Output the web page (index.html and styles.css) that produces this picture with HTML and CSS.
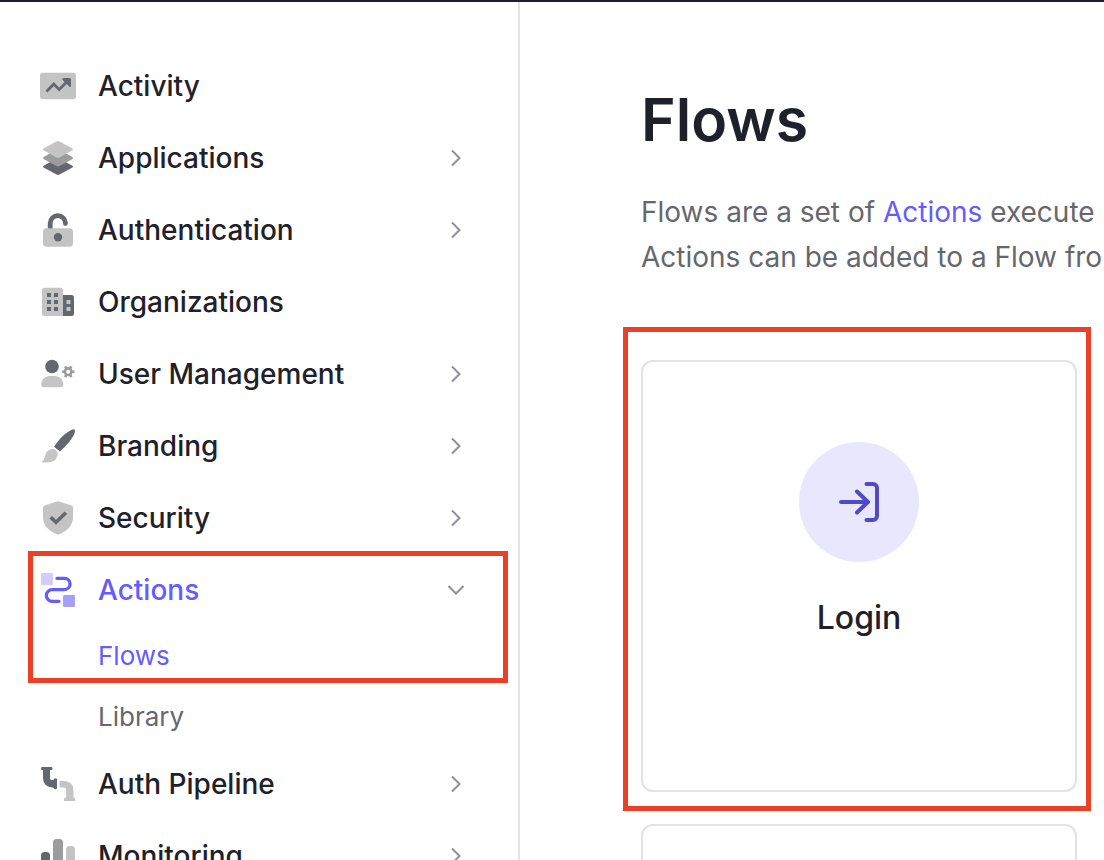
FILE: index.html
```html
<!DOCTYPE html>
<html lang="en">
<head>
    <meta charset="UTF-8">
    <meta name="viewport" content="width=device-width, initial-scale=1.0">
    <title>Flows</title>
    <link rel="stylesheet" href="styles.css">
</head>
<body>

<div class="layout">
    <nav class="sidebar">
        <ul class="menu">
            <li>
                <a class="menu-item" href="#activity">
                    <svg class="icon" viewBox="0 0 36 36">
                        <rect class="light" y="4.7" width="36" height="26.6" rx="3"/>
                        <path class="line" stroke-width="2.8" d="M6.5 23.5 13.8 16l5.4 5.6L27 13.800"/>
                        <path class="dark" d="M23.500 10h6q1.500 0 1.500 1.500v7.300h-1.500l-7.300-7.300q0-1.500 1.300-1.500z"/>
                    </svg>
                    <span class="label">Activity</span>
                </a>
            </li>
            <li>
                <button class="menu-item" type="button">
                    <svg class="icon" viewBox="0 0 36 36">
                        <path class="dark" d="M3.500 25.700 18 18l14.500 7.700q1 .9 0 1.800L19.500 34.600q-1.500.8-3 0L3.500 27.500q-1-.9 0-1.800z"/>
                        <path class="mid" d="M3.500 17.100 18 9l14.500 8.100q1 .9 0 1.800L19.500 26q-1.500.8-3 0L3.500 18.900q-1-.9 0-1.800z"/>
                        <path class="light" d="M3.500 8.400 16.500 1.400q1.500-.8 3 0l13 7q1 .9 0 1.800l-13 7.200q-1.500.8-3 0l-13-7.200q-1-.9 0-1.800z"/>
                    </svg>
                    <span class="label">Applications</span>
                    <svg class="chevron" viewBox="0 0 24 24"><path d="m8 4.500 7.500 7.500L8 19.500"/></svg>
                </button>
            </li>
            <li>
                <button class="menu-item" type="button">
                    <svg class="icon" viewBox="0 0 36 36">
                        <path class="line" stroke-width="4.800" d="M10.200 18v-6.800a7.600 7.600 0 0 1 15.200 0"/>
                        <circle class="dark" cx="25.400" cy="11.500" r="2.400"/>
                        <rect class="light" x="3" y="16.200" width="30" height="18.600" rx="3.500"/>
                        <circle class="dark" cx="18" cy="25.300" r="4.200"/>
                    </svg>
                    <span class="label">Authentication</span>
                    <svg class="chevron" viewBox="0 0 24 24"><path d="m8 4.500 7.500 7.500L8 19.500"/></svg>
                </button>
            </li>
            <li>
                <a class="menu-item" href="#organizations">
                    <svg class="icon" viewBox="0 0 36 36">
                        <path class="light" d="M4.500 3.800h16q2.500 0 2.500 2.500V32H4.500Q2 32 2 29.500V6.300q0-2.500 2.500-2.500z"/>
                        <path class="dark" d="M23 11h8.500q2.500 0 2.500 2.500v16q0 2.500-2.500 2.500H23z"/>
                        <path class="dark" d="M7 9h4v4H7zM14 9h4v4h-4zM7 16h4v4H7zM14 16h4v4h-4zM7 23h4v4H7zM14 23h4v4h-4z"/>
                        <path class="light" d="M26.500 16h4v4h-4zM26.500 23h4v4h-4z"/>
                    </svg>
                    <span class="label">Organizations</span>
                </a>
            </li>
            <li>
                <button class="menu-item" type="button">
                    <svg class="icon" viewBox="0 0 36 36">
                        <circle class="dark" cx="12" cy="10.500" r="6.800"/>
                        <path class="light" d="M9 20h6.500q7.800 1 7.800 9.300 0 2-2 2h-18q-2 0-2-2Q1.300 21 9 20z"/>
                        <g class="gear">
                            <circle cx="28.200" cy="15.700" r="3.300"/>
                            <path d="M32 15.700h2.500M22 15.700h2.400M30.100 19l1.200 2.100M25.100 10.300l1.200 2.100M30.100 12.400l1.200-2.100M25.100 21.100l1.200-2.100"/>
                        </g>
                    </svg>
                    <span class="label">User Management</span>
                    <svg class="chevron" viewBox="0 0 24 24"><path d="m8 4.500 7.500 7.500L8 19.500"/></svg>
                </button>
            </li>
            <li>
                <button class="menu-item" type="button">
                    <svg class="icon" viewBox="0 0 36 36">
                        <path class="dark" d="M34.600 1.500q1 1.500-.8 5.500-3 6.500-13.800 16.500L14 18.800Q21 8 29 3.200q4-2.500 5.600-1.700z"/>
                        <path class="light" d="M11 21.300q3-1 5 1t1.500 5.200Q16 34.500 6 34.600q-4 0-4.500-1.200 3-1.400 3.500-5 .7-5.600 6-7.100z"/>
                    </svg>
                    <span class="label">Branding</span>
                    <svg class="chevron" viewBox="0 0 24 24"><path d="m8 4.500 7.500 7.500L8 19.500"/></svg>
                </button>
            </li>
            <li>
                <button class="menu-item" type="button">
                    <svg class="icon" viewBox="0 0 36 36">
                        <path class="light" d="M17 1.400q1-.4 2 0l12.500 4.100q1.500.5 1.500 2V17q0 11.500-13.800 17.200-1.200.5-2.400 0Q3 28.500 3 17V7.500q0-1.500 1.500-2z"/>
                        <path class="line" stroke-width="3.600" d="m10.700 17.200 5.300 5.100 9.800-9.500"/>
                    </svg>
                    <span class="label">Security</span>
                    <svg class="chevron" viewBox="0 0 24 24"><path d="m8 4.500 7.500 7.500L8 19.500"/></svg>
                </button>
            </li>
            <li>
                <div class="marked marked-menu">
                    <button class="menu-item active" type="button" aria-expanded="true">
                        <svg class="icon" viewBox="0 0 36 36">
                            <rect x="1" y="1" width="12" height="12" rx="1.500" fill="#d0cdfb"/>
                            <rect x="23" y="23" width="12" height="12" rx="1.500" fill="#a49ff7"/>
                            <path d="M17 6.300h7.400a5.600 5.600 0 0 1 0 11.300H12.200a5.800 5.800 0 0 0 0 11.700H19" fill="none" stroke="#635dff" stroke-width="3.300" stroke-linecap="round"/>
                        </svg>
                        <span class="label">Actions</span>
                        <svg class="chevron" viewBox="0 0 24 24"><path d="m4.500 8 7.500 7.500L19.500 8"/></svg>
                    </button>
                    <a class="submenu-item active" href="#flows">Flows</a>
                </div>
                <a class="submenu-item" href="#library">Library</a>
            </li>
            <li>
                <button class="menu-item" type="button">
                    <svg class="icon" viewBox="0 0 36 36">
                        <path class="dark" d="M2 1h9.500q1 0 1 1.500t-1 1.500H10v8.500q0 1.500 2 1.500h1.500q.5-1.800 2-1.800 1.500 0 1.500 1v9q0 1-1.500 1t-2-1.500Q3 21 3 12V4H2Q1 4 1 2.500T2 1z"/>
                        <path class="light" d="M20.500 14.700h2Q33.500 15 33.500 24v7.500h.5q1 0 1 1.500v2H24v-2q0-1.500 1.500-1.500h.7V24q0-2.500-2.700-2.500h-3q-1 0-1-1v-4.800q0-1 1-1z"/>
                    </svg>
                    <span class="label">Auth Pipeline</span>
                    <svg class="chevron" viewBox="0 0 24 24"><path d="m8 4.500 7.500 7.500L8 19.500"/></svg>
                </button>
            </li>
            <li>
                <button class="menu-item" type="button">
                    <svg class="icon" viewBox="0 0 36 36">
                        <rect class="dark" x="1" y="14" width="9" height="21" rx="3.500"/>
                        <rect class="mid" x="13" y="1" width="10" height="34" rx="3.500"/>
                        <rect class="light" x="26" y="8" width="9" height="27" rx="3.500"/>
                    </svg>
                    <span class="label">Monitoring</span>
                    <svg class="chevron" viewBox="0 0 24 24"><path d="m8 4.500 7.500 7.500L8 19.500"/></svg>
                </button>
            </li>
        </ul>
    </nav>

    <main class="content">
        <h1>Flows</h1>
        <p class="intro">
            Flows are a set of <a href="#actions">Actions</a> execute<br>
            Actions can be added to a Flow fro
        </p>
        <div class="cards">
            <div class="marked marked-card">
                <a class="card" href="#login">
                    <span class="card-icon">
                        <svg viewBox="0 0 48 48"><path d="M6 24h27M22 13.500 33 24 22 34.500M31.500 6H38a4 4 0 0 1 4 4v28a4 4 0 0 1-4 4h-6.500"/></svg>
                    </span>
                    <span class="card-title">Login</span>
                </a>
            </div>
            <div class="card"></div>
        </div>
    </main>
</div>

</body>
</html>
```
FILE: styles.css
```css
* {
    margin: 0;
    padding: 0;
    box-sizing: border-box;
}
body {
    font-family: Inter, "Liberation Sans", sans-serif;
    font-size: 28px;
    background-color: #fff;
    color: #1e212a;
}
a {
    color: #635dff;
    text-decoration: none;
}
.layout {
    display: flex;
    height: 100vh;
    overflow: hidden;
    border-top: 2px solid #1e1f25;
}

/* Sidebar */
.sidebar {
    flex: 0 0 520px;
    padding: 48px 50px 0 40px;
    border-right: 2px solid #e3e3e3;
}
.menu {
    list-style: none;
}
.menu-item {
    display: flex;
    align-items: center;
    gap: 22px;
    width: 100%;
    height: 72px;
    border: none;
    background: none;
    font: inherit;
    font-weight: 500;
    color: #1e212a;
    text-align: left;
    cursor: pointer;
}
.label {
    flex: 1;
}
.submenu-item {
    display: flex;
    align-items: center;
    height: 61px;
    padding: 0 0 2px 58px;
    font-size: 26px;
    color: #65676e;
}
.menu-item.active, .submenu-item.active {
    color: #635dff;
}
.icon {
    flex: none;
    width: 36px;
    height: 36px;
}
.light {
    fill: #c4c4c4;
}
.mid {
    fill: #9b9c9e;
}
.dark {
    fill: #65676e;
}
.line {
    fill: none;
    stroke: #65676e;
}
.gear {
    fill: none;
    stroke: #9b9c9e;
    stroke-width: 2.6;
}
.chevron {
    flex: none;
    width: 24px;
    height: 24px;
    fill: none;
    stroke: #8f9098;
    stroke-width: 2;
}

/* Red frames around the highlighted parts */
.marked {
    position: relative;
}
.marked::after {
    content: "";
    position: absolute;
    border: 5px solid #eb4025;
    pointer-events: none;
}
.marked-menu::after {
    inset: -3px -40px 4px -12px;
}
.marked-card::after {
    inset: -33px -14px -19px -18px;
}

/* Main part */
.content {
    flex: 1;
    min-width: 0;
    padding: 80px 27px 0 121px;
}
h1 {
    font-size: 59px;
    font-weight: 600;
    line-height: 76px;
    margin-bottom: 32px;
}
.intro {
    line-height: 45px;
    color: #65676e;
    white-space: nowrap;
    margin-bottom: 80px;
}
.cards {
    display: grid;
    grid-template-columns: repeat(auto-fill, minmax(400px, 1fr));
    gap: 32px;
}
.card {
    display: flex;
    flex-direction: column;
    align-items: center;
    gap: 36px;
    min-height: 432px;
    padding-top: 80px;
    border: 2px solid #e3e3e3;
    border-radius: 12px;
    color: #1e212a;
}
.card-icon {
    display: flex;
    align-items: center;
    justify-content: center;
    width: 120px;
    height: 120px;
    border-radius: 50%;
    background-color: #e9e7fd;
}
.card-icon svg {
    width: 48px;
    height: 48px;
    fill: none;
    stroke: #5249c9;
    stroke-width: 4;
    stroke-linecap: round;
    stroke-linejoin: round;
}
.card-title {
    font-size: 32px;
    font-weight: 500;
    line-height: 40px;
}
```
